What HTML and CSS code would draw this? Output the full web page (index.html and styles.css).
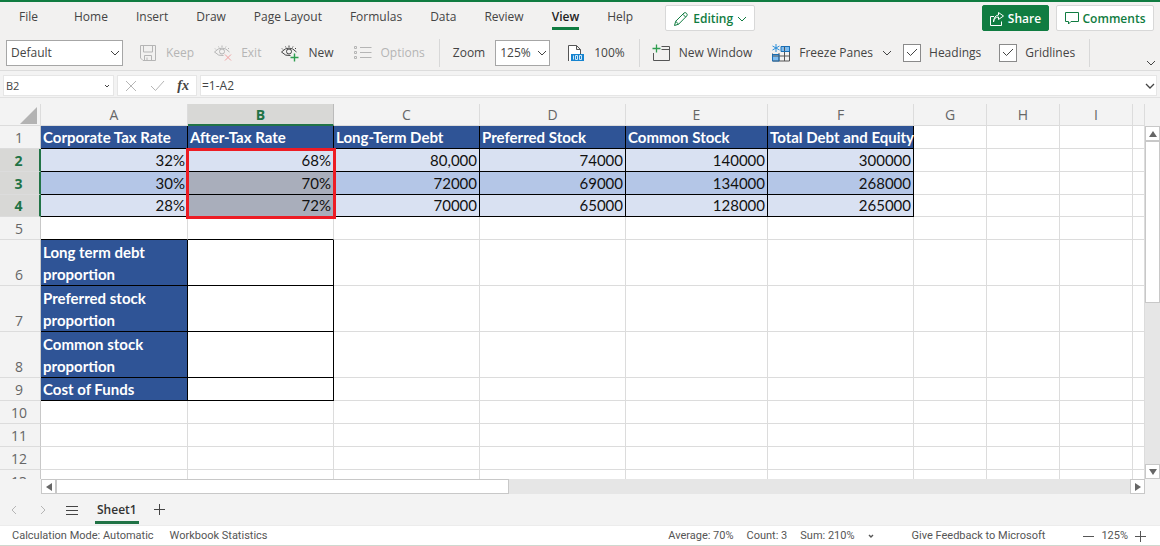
FILE: index.html
```
<!DOCTYPE html>
<html lang="en">
<head>
    <meta charset="utf-8">
    <title>Cost of Funds</title>
    <link rel="stylesheet" href="styles.css">
</head>
<body>
    <header class="top-bar">
        <nav class="tabs">
            <button class="tab tab-file">File</button>
            <button class="tab">Home</button>
            <button class="tab">Insert</button>
            <button class="tab">Draw</button>
            <button class="tab">Page Layout</button>
            <button class="tab">Formulas</button>
            <button class="tab">Data</button>
            <button class="tab">Review</button>
            <button class="tab active">View</button>
            <button class="tab">Help</button>
        </nav>
        <button class="pill editing">
            <svg width="16" height="16" viewBox="0 0 16 16" fill="none" stroke="currentColor"><path d="M1.5 14.5l1.2-4.2L11 2q1.2-1 2.5.3t.3 2.6L5.6 13.2zM2.7 10.3l2.9 2.9M9.8 3.2l2.9 2.9"/></svg>
            <span>Editing</span>
            <svg width="10" height="6" viewBox="0 0 10 6" fill="none" stroke="currentColor"><path d="M1 1l4 4 4-4"/></svg>
        </button>
        <div class="top-right">
            <button class="pill share">
                <svg width="14" height="14" viewBox="0 0 14 14" fill="none" stroke="currentColor"><path d="M4 4.500H.5v9h11V9.500M3.500 10q.5-5 5-5V7.500L13.500 4 8.500.5V3Q4 3.500 3.500 10z"/></svg>
                <span>Share</span>
            </button>
            <button class="pill comments">
                <svg width="14" height="13" viewBox="0 0 14 13" fill="none" stroke="currentColor"><path d="M.5.5h13v9H6L3.500 12V9.500h-3z"/></svg>
                <span>Comments</span>
            </button>
        </div>
    </header>

    <div class="ribbon">
        <select class="drop view-drop" aria-label="Sheet view"><option>Default</option></select>
        <button class="tool disabled keep">
            <svg width="16" height="16" viewBox="0 0 16 16" fill="none" stroke="currentColor"><path d="M.5.5h15v15H3L.5 13zM3.500.5v6.500h9V.5M4.500 15.500v-5h7v5M7 12.500v3" /></svg>
            <span>Keep</span>
        </button>
        <button class="tool disabled">
            <svg width="18" height="18" viewBox="0 0 18 18" fill="none" stroke="currentColor"><path d="M.5 8Q8 0 15.500 8M.5 8q4 4.500 9 3.500M2 5.500l-1-1M5 3.500l-.5-1M8 3V1.500M11.500 3.500l.5-1M14 5l1-1"/><circle cx="8" cy="7.500" r="2.500"/><path d="M11 10.500l6 6m0-6l-6 6" stroke="#f0a0a0"/></svg>
            <span>Exit</span>
        </button>
        <button class="tool">
            <svg width="18" height="18" viewBox="0 0 18 18" fill="none" stroke="currentColor"><path d="M.5 8Q8 0 15.500 8M.5 8q4 4.500 9 3.500M2 5.500l-1-1M5 3.500l-.5-1M8 3V1.500M11.500 3.500l.5-1M14 5l1-1"/><circle cx="8" cy="7.500" r="2.500"/><path d="M13.500 9.500v8m-4-4h8" stroke="#2f9e4f" stroke-width="1.400"/></svg>
            <span>New</span>
        </button>
        <button class="tool disabled">
            <svg width="18" height="14" viewBox="0 0 18 14" fill="none" stroke="currentColor"><path d="M.5.5h2v2h-2zM.5 5.500h2v2h-2zM.5 10.500h2v2h-2zM6 1.500h11.500M6 6.500h11.500M6 11.500h11.500"/></svg>
            <span>Options</span>
        </button>
        <span class="divider"></span>
        <label class="zoom-label" for="zoom">Zoom</label>
        <select class="drop zoom-drop" id="zoom"><option>125%</option></select>
        <button class="tool page-zoom">
            <svg width="18" height="18" viewBox="0 0 18 18"><path d="M1.500 17V1.500h8l4 4V11M9.500 1.500v4h4" fill="#fff" stroke="#555"/><path d="M4 10h13v7H4z" fill="#1684d0"/><path d="M6.500 11.500v4M8.500 11.500h2v4h-2zM12.500 11.500h2v4h-2z" fill="none" stroke="#fff" stroke-width=".8"/></svg>
            <span>100%</span>
        </button>
        <span class="divider"></span>
        <button class="tool new-window">
            <svg width="18" height="18" viewBox="0 0 18 18" fill="none" stroke="#555"><path d="M9.500 2.500h8v14h-16V9M9.500 5.500h8"/><path d="M4.500.5v8m-4-4h8" stroke="#2f9e4f" stroke-width="1.300"/></svg>
            <span>New Window</span>
        </button>
        <button class="tool freeze">
            <svg width="18" height="18" viewBox="0 0 18 18" fill="none"><path d="M9 3h8.500v4.500H9zM1 11h6v5.500H1z" fill="#7dbcf0"/><path d="M9 2.500h8.500v14.500H.5V9.500M9 7.500h8.500M.5 12h17M7 9v8M12.500 2.500V17" stroke="#555"/><path d="M9 2.500h8.500v5H9zM.5 10.500H7v6.500H.5z" stroke="#1a6fb5"/><path d="M4 0v8M.5 2l7 4M7.500 2l-7 4" stroke="#2a8dd8"/></svg>
            <span>Freeze Panes</span>
            <svg width="10" height="6" viewBox="0 0 10 6" fill="none" stroke="currentColor"><path d="M1 1l4 4 4-4"/></svg>
        </button>
        <label class="check"><input type="checkbox" checked> Headings</label>
        <label class="check"><input type="checkbox" checked> Gridlines</label>
        <span class="divider"></span>
        <button class="collapse" aria-label="Ribbon options">
            <svg width="10" height="6" viewBox="0 0 10 6" fill="none" stroke="currentColor"><path d="M1 1l4 4 4-4"/></svg>
        </button>
    </div>

    <div class="formula-bar">
        <div class="name-box">
            <input type="text" value="B2" aria-label="Name box">
            <button aria-label="Show names"><svg width="6" height="4" viewBox="0 0 6 4" fill="none" stroke="currentColor"><path d="M1 1l2 2 2-2"/></svg></button>
        </div>
        <div class="formula-actions">
            <button aria-label="Cancel"><svg width="12" height="12" viewBox="0 0 12 12" fill="none" stroke="#b5b5b5"><path d="M1 1l10 10M11 1L1 11"/></svg></button>
            <button aria-label="Enter"><svg width="15" height="12" viewBox="0 0 15 12" fill="none" stroke="#b5b5b5"><path d="M1 6l4.500 4.500L14 1"/></svg></button>
            <button class="fx" aria-label="Insert function">fx</button>
        </div>
        <div class="formula">
            <input type="text" value="=1-A2" aria-label="Formula">
            <button aria-label="Expand formula bar"><svg width="10" height="6" viewBox="0 0 10 6" fill="none" stroke="currentColor" stroke-width="1.300"><path d="M1 1l4 4 4-4"/></svg></button>
        </div>
    </div>

    <main class="workbook">
        <div class="sheet-area">
            <table class="sheet">
                <colgroup>
                    <col class="col-head"><col class="col-first"><col class="col-wide"><col class="col-wide"><col class="col-wide"><col class="col-mid"><col class="col-wide"><col class="col-thin"><col class="col-thin"><col class="col-thin"><col>
                </colgroup>
                <thead>
                    <tr>
                        <th class="corner"><svg width="17" height="17" viewBox="0 0 17 17"><path d="M17 0v17H0z" fill="#b3b3b3"/></svg></th>
                        <th>A</th><th class="picked">B</th><th>C</th><th>D</th><th>E</th><th>F</th><th>G</th><th>H</th><th>I</th><th></th>
                    </tr>
                </thead>
                <tbody>
                    <tr class="title-row"><th>1</th><td>Corporate Tax Rate</td><td>After-Tax Rate</td><td>Long-Term Debt</td><td>Preferred Stock</td><td>Common Stock</td><td>Total Debt and Equity</td><td></td><td></td><td></td><td></td></tr>
                    <tr class="data"><th class="picked">2</th><td>32%</td><td class="cursor">68%</td><td>80,000</td><td>74000</td><td>140000</td><td>300000</td><td></td><td></td><td></td><td></td></tr>
                    <tr class="data band"><th class="picked">3</th><td>30%</td><td class="selected">70%</td><td>72000</td><td>69000</td><td>134000</td><td>268000</td><td></td><td></td><td></td><td></td></tr>
                    <tr class="data short"><th class="picked">4</th><td>28%</td><td class="selected">72%</td><td>70000</td><td>65000</td><td>128000</td><td>265000</td><td></td><td></td><td></td><td></td></tr>
                    <tr class="above-box"><th>5</th><td></td><td></td><td></td><td></td><td></td><td></td><td></td><td></td><td></td><td></td></tr>
                    <tr class="result tall"><th>6</th><td>Long term debt proportion</td><td></td><td></td><td></td><td></td><td></td><td></td><td></td><td></td><td></td></tr>
                    <tr class="result tall"><th>7</th><td>Preferred stock proportion</td><td></td><td></td><td></td><td></td><td></td><td></td><td></td><td></td><td></td></tr>
                    <tr class="result tall"><th>8</th><td>Common stock proportion</td><td></td><td></td><td></td><td></td><td></td><td></td><td></td><td></td><td></td></tr>
                    <tr class="result"><th>9</th><td>Cost of Funds</td><td></td><td></td><td></td><td></td><td></td><td></td><td></td><td></td><td></td></tr>
                    <tr><th>10</th><td></td><td></td><td></td><td></td><td></td><td></td><td></td><td></td><td></td><td></td></tr>
                    <tr><th>11</th><td></td><td></td><td></td><td></td><td></td><td></td><td></td><td></td><td></td><td></td></tr>
                    <tr><th>12</th><td></td><td></td><td></td><td></td><td></td><td></td><td></td><td></td><td></td><td></td></tr>
                    <tr><th>13</th><td></td><td></td><td></td><td></td><td></td><td></td><td></td><td></td><td></td><td></td></tr>
                </tbody>
            </table>
        </div>
        <div class="scroll-v">
            <button aria-label="Scroll up"><svg width="8" height="6" viewBox="0 0 8 6"><path d="M4 0l4 6H0z"/></svg></button>
            <div class="thumb"></div>
            <button aria-label="Scroll down"><svg width="8" height="6" viewBox="0 0 8 6"><path d="M0 0h8L4 6z"/></svg></button>
        </div>
        <div class="scroll-h">
            <button aria-label="Scroll left"><svg width="6" height="8" viewBox="0 0 6 8"><path d="M6 0v8L0 4z"/></svg></button>
            <div class="thumb"></div>
            <button aria-label="Scroll right"><svg width="6" height="8" viewBox="0 0 6 8"><path d="M0 0l6 4-6 4z"/></svg></button>
        </div>
    </main>

    <div class="sheet-tabs">
        <button class="faint" aria-label="Previous sheet"><svg width="6" height="10" viewBox="0 0 6 10" fill="none" stroke="currentColor"><path d="M5 1L1 5l4 4"/></svg></button>
        <button class="faint" aria-label="Next sheet"><svg width="6" height="10" viewBox="0 0 6 10" fill="none" stroke="currentColor"><path d="M1 1l4 4-4 4"/></svg></button>
        <button aria-label="All sheets"><svg width="12" height="10" viewBox="0 0 12 10" fill="none" stroke="currentColor"><path d="M0 1.500h12M0 5.500h12M0 9.500h12"/></svg></button>
        <button class="sheet-name">Sheet1</button>
        <button aria-label="Add sheet"><svg width="11" height="11" viewBox="0 0 11 11" fill="none" stroke="currentColor"><path d="M5.500 0v11M0 5.500h11"/></svg></button>
    </div>

    <footer class="status">
        <span>Calculation Mode: Automatic</span>
        <span>Workbook Statistics</span>
        <div class="totals">
            <span>Average: 70%</span>
            <span>Count: 3</span>
            <span>Sum: 210%</span>
            <button aria-label="Choose totals"><svg width="6" height="4" viewBox="0 0 6 4" fill="none" stroke="currentColor" stroke-width="1.400"><path d="M1 1l2 2 2-2"/></svg></button>
        </div>
        <a class="feedback" href="#">Give Feedback to Microsoft</a>
        <div class="zoom">
            <button aria-label="Zoom out"><svg width="11" height="11" viewBox="0 0 11 11" stroke="currentColor"><path d="M0 5.500h11"/></svg></button>
            <span>125%</span>
            <button aria-label="Zoom in"><svg width="11" height="11" viewBox="0 0 11 11" stroke="currentColor"><path d="M5.500 0v11M0 5.500h11"/></svg></button>
        </div>
    </footer>
</body>
</html>
```

FILE: styles.css
```
*, *::after {
    box-sizing: border-box;
}

body {
    margin: 0;
    height: 100vh;
    display: flex;
    flex-direction: column;
    overflow: hidden;
    background: #f3f3f3;
    color: #444;
    font-family: "Open Sans", "Noto Sans", sans-serif;
    font-size: 12px;
    line-height: 16px;
}

button, input, select {
    font: inherit;
    color: inherit;
    border: none;
    border-radius: 0;
    background: none;
    padding: 0;
    margin: 0;
    outline: none;
}

button {
    display: flex;
    align-items: center;
    justify-content: center;
    white-space: nowrap;
}

svg {
    flex: none;
}

/* tabs */
.top-bar {
    display: flex;
    flex: none;
    height: 34px;
    border-top: 2px solid #107c41;
    background: #f2f1f0;
}

.tabs {
    display: flex;
    gap: 28px;
    padding-left: 19px;
}

.tab {
    height: 28px;
    padding-top: 4px;
    border-bottom: 3px solid transparent;
}

.tab-file {
    margin-right: 8px;
}

.tab.active {
    color: #222;
    font-weight: 600;
    border-bottom-color: #107c41;
}

.pill {
    height: 26px;
    margin-top: 3px;
    padding-top: 1px;
    gap: 4px;
    border: 1px solid #d8d8d8;
    border-radius: 2px;
    background: #fff;
    color: #107c41;
    font-weight: 600;
}

.editing {
    width: 90px;
    margin-left: 32px;
}

.top-right {
    display: flex;
    gap: 7px;
    margin-left: auto;
    padding-right: 6px;
}

.share {
    width: 67px;
    border-color: #107c41;
    background: #107c41;
    color: #fff;
}

.comments {
    width: 98px;
}

/* ribbon */
.ribbon {
    display: flex;
    flex: none;
    align-items: center;
    height: 37px;
    padding: 1px 4px 0 6px;
    border-bottom: 1px solid #dcdcdc;
    background: #f2f1f0;
}

.drop {
    appearance: none;
    height: 26px;
    padding-left: 4px;
    border: 1px solid #a6a6a6;
    background: #fff url("data:image/svg+xml,%3Csvg xmlns='http://www.w3.org/2000/svg' width='10' height='6' fill='none' stroke='%23444'%3E%3Cpath d='M1 1l4 4 4-4'/%3E%3C/svg%3E") no-repeat right 2px center;
}

.view-drop {
    width: 117px;
}

.zoom-drop {
    width: 55px;
}

.tool {
    gap: 9px;
    margin-left: 20px;
}

.tool.keep {
    margin-left: 17px;
    gap: 10px;
}

.tool.disabled {
    color: #b5b5b5;
}

.divider {
    width: 1px;
    height: 28px;
    margin-left: 14px;
    background: #d8d8d8;
}

.zoom-label {
    margin: 0 10px 0 13px;
}

.tool.page-zoom {
    margin-left: 17px;
}

.tool.new-window {
    margin-left: 12px;
}

.tool.freeze {
    gap: 9px;
}

.check {
    display: flex;
    align-items: center;
    gap: 8px;
    margin-left: 11px;
}

.check + .check {
    margin-left: 18px;
}

.check input {
    appearance: none;
    width: 18px;
    height: 18px;
    border: 1px solid #8a8a8a;
    background: #fff url("data:image/svg+xml,%3Csvg xmlns='http://www.w3.org/2000/svg' width='12' height='9' fill='none' stroke='%23444'%3E%3Cpath d='M1 4l3.500 3.500L11 1'/%3E%3C/svg%3E") no-repeat center;
}

.collapse {
    align-self: flex-end;
    height: 14px;
    margin-left: auto;
}

/* formula bar */
.formula-bar {
    display: flex;
    flex: none;
    gap: 3px;
    height: 27px;
    padding: 4px 3px 1px;
    border-bottom: 1px solid #e2e2e2;
    font-size: 11px;
}

.name-box, .formula-actions, .formula {
    display: flex;
    border: 1px solid #e6e6e6;
    background: #fff;
}

.name-box {
    width: 111px;
    padding: 0 3px 0 2px;
}

.name-box input, .formula input {
    flex: 1;
    min-width: 0;
}

.formula-actions {
    justify-content: space-between;
    width: 80px;
    padding: 0 7px;
}

.fx {
    font: italic bold 14px "Liberation Serif", serif;
}

.formula {
    flex: 1;
    padding: 0 1px;
    font-size: 12px;
}

/* grid */
.workbook {
    display: grid;
    flex: 1;
    min-height: 0;
    grid-template-columns: 41px 1fr 15px;
    grid-template-rows: 28px 1fr 15px;
}

.sheet-area {
    grid-area: 1 / 1 / 3 / 3;
    min-height: 0;
    padding-top: 6px;
    overflow: hidden;
}

.sheet {
    width: 100%;
    table-layout: fixed;
    border-collapse: separate;
    border-spacing: 0;
    font-family: Lato, Carlito, sans-serif;
    font-size: 15px;
    line-height: 22px;
    color: #111;
}

.col-head {
    width: 41px;
}

.col-first {
    width: 147px;
}

.col-wide {
    width: 146px;
}

.col-mid {
    width: 142px;
}

.col-thin {
    width: 73px;
}

.sheet tr {
    height: 23px;
}

.sheet thead tr, .sheet .short {
    height: 22px;
}

.short td {
    line-height: 21px;
}

.sheet .tall {
    height: 46px;
}

.sheet th, .sheet td {
    padding: 0 2px;
    border-right: 1px solid #dcdcdc;
    border-bottom: 1px solid #dcdcdc;
    white-space: nowrap;
}

.sheet th {
    background: #f3f3f3;
    color: #666;
    font-family: "Open Sans", "Noto Sans", sans-serif;
    font-size: 14px;
    font-weight: 400;
    line-height: 20px;
    vertical-align: bottom;
}

.sheet tbody th {
    border-right-color: #c8c8c8;
    padding: 0 2px 0 0;
}

.sheet td {
    background: #fff;
}

.sheet th.corner {
    padding: 0 3px 1px 0;
    text-align: right;
    line-height: 0;
}

.sheet th.picked {
    background: #d8d8d6;
    color: #217346;
    font-weight: 700;
    border-right: 2px solid #217346;
}

.sheet thead th.picked {
    border-right: 1px solid #bbb;
    border-bottom: 2px solid #217346;
    line-height: 19px;
}

.title-row td:nth-child(-n+7) {
    background: #2f5496;
    border-color: #000;
    color: #fff;
    font-weight: 700;
}

.data td:nth-child(-n+7) {
    background: #d9e1f2;
    border-color: #000;
    text-align: right;
}

.data.band td:nth-child(-n+7) {
    background: #b4c6e7;
}

.data td.selected:nth-child(3) {
    background: #a9aebb;
}

.above-box td:nth-child(-n+3) {
    border-bottom-color: #000;
}

.result td:nth-child(-n+3) {
    border-color: #000;
}

.result td:nth-child(2) {
    background: #2f5496;
    color: #fff;
    font-weight: 700;
    white-space: normal;
}

/* red frame round B2:B4 */
.cursor {
    position: relative;
}

.cursor::after {
    content: "";
    position: absolute;
    top: -1px;
    left: -2px;
    right: -3px;
    height: 71px;
    border: 3px solid #ed1c24;
}

/* scroll bars */
.scroll-v, .scroll-h {
    display: flex;
    background: #e6e6e6;
}

.scroll-v {
    grid-area: 2 / 3;
    flex-direction: column;
    justify-content: space-between;
}

.scroll-h {
    grid-area: 3 / 2;
}

.scroll-v button, .scroll-h button {
    flex: none;
    width: 15px;
    height: 15px;
    border: 1px solid #c8c8c8;
    background: #fff;
    fill: #666;
}

.thumb {
    border: 1px solid #c8c8c8;
    background: #fff;
}

.scroll-v .thumb {
    height: 46%;
    margin-bottom: auto;
}

.scroll-h .thumb {
    width: 41%;
    margin-right: auto;
}

/* sheet tabs */
.sheet-tabs {
    display: flex;
    flex: none;
    height: 32px;
    padding-left: 11px;
    border-bottom: 1px solid #ececec;
}

.sheet-tabs .faint {
    width: 6px;
    margin-right: 23px;
    color: #b5b5b5;
}

.sheet-tabs .faint + .faint {
    margin-right: 20px;
}

.sheet-tabs .sheet-name {
    height: 30px;
    margin: 0 15px 0 17px;
    padding: 5px 2px 0;
    border-bottom: 3px solid #217346;
    color: #333;
    font-weight: 600;
}

/* status bar */
.status {
    display: flex;
    flex: none;
    align-items: center;
    gap: 16px;
    height: 20px;
    padding: 1px 14px 0 12px;
    border-bottom: 1px solid #cfd8cf;
    background: #fff;
    color: #555;
    font-family: Roboto, "Open Sans", sans-serif;
    font-size: 11px;
    white-space: nowrap;
}

.totals {
    display: flex;
    gap: 13px;
    margin-left: auto;
}

.feedback {
    margin: 0 22px;
    color: inherit;
    text-decoration: none;
}

.zoom {
    display: flex;
    gap: 7px;
}
```
